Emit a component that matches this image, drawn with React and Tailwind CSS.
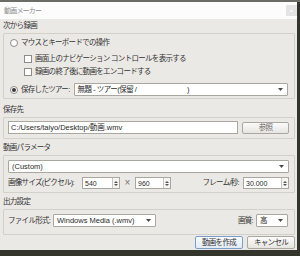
import React from "react";

const JP = { fontFamily: "'Liberation Sans','Noto Sans CJK JP',sans-serif" };

function Radio({ checked }) {
  return (
    <span className="w-[8px] h-[8px] rounded-full border border-[#8e8c87] bg-white flex items-center justify-center shrink-0">
      {checked && <span className="w-[4px] h-[4px] rounded-full bg-[#3a3a3a]" />}
    </span>
  );
}

function Check() {
  return <span className="w-[8px] h-[8px] border border-[#8e8c87] bg-white shrink-0" />;
}

function Arrow() {
  return (
    <svg width="5" height="3" viewBox="0 0 5 3" className="shrink-0">
      <path d="M0 0 L5 0 L2.5 3 Z" fill="#4a4a4a" />
    </svg>
  );
}

function Select({ className, children }) {
  return (
    <div className={"h-[13px] border border-[#aaa7a1] bg-white rounded-[1px] flex items-center justify-between pl-[3px] pr-[4px] " + className}>
      <span className="text-[7.5px] leading-none text-[#2a2a2a] whitespace-nowrap">{children}</span>
      <Arrow />
    </div>
  );
}

function Spin({ className, children }) {
  return (
    <div className={"h-[12px] border border-[#aaa7a1] bg-white flex items-stretch " + className}>
      <span className="flex-1 flex items-center pl-[2px] text-[7px] leading-none text-[#2a2a2a]">{children}</span>
      <span className="w-[7px] border-l border-[#c9c6c0] flex flex-col items-center justify-center gap-[1px] bg-[#f6f5f3]">
        <svg width="4" height="2" viewBox="0 0 4 2"><path d="M0 2 L4 2 L2 0 Z" fill="#555" /></svg>
        <svg width="4" height="2" viewBox="0 0 4 2"><path d="M0 0 L4 0 L2 2 Z" fill="#555" /></svg>
      </span>
    </div>
  );
}

function Jp({ children, className = "" }) {
  return <span className={"text-[7.5px] tracking-[-0.7px] leading-none text-[#333] whitespace-nowrap " + className}>{children}</span>;
}

function Group({ className, children }) {
  return <div className={"border border-[#d3d0ca] rounded-[1px] " + className}>{children}</div>;
}

export default function App() {
  return (
    <div className="w-[300px] h-[256px] bg-[#33352d] overflow-hidden" style={JP}>
      <div className="h-[2px] bg-[#6b6c66]" />
      <div className="w-[297px] flex flex-col">
        {/* title bar */}
        <div className="h-[17px] bg-[#fcfcfc] flex items-center justify-between pl-[4px] pr-[0px]">
          <span className="text-[7px] tracking-[-0.8px] text-[#8d8d8d] leading-none">動画メーカー</span>
          <span className="w-[11px] h-[11px] bg-[#e4e4e4] flex items-center justify-center">
            <span className="w-[3px] h-[2px] bg-[#f4f4f4]" />
          </span>
        </div>
        {/* body */}
        <div className="h-[231px] bg-[#ebe9e5] flex flex-col pl-[3px] pr-[2px]">
          <div className="h-[14px] flex items-center"><Jp>次から録画</Jp></div>
          <Group className="h-[66px] pt-[2px] pr-[6px]">
            <div className="h-[14px] flex items-center pl-[6px] gap-[3px]">
              <Radio /><Jp>マウスとキーボードでの操作</Jp>
            </div>
            <div className="h-[13px] mt-[2px] flex items-center pl-[20px] gap-[3px]">
              <Check /><Jp>画面上のナビゲーション コントロールを表示する</Jp>
            </div>
            <div className="h-[13px] flex items-center pl-[20px] gap-[3px]">
              <Check /><Jp>録画の終了後に動画をエンコードする</Jp>
            </div>
            <div className="h-[13px] mt-[5px] flex items-center pl-[6px]">
              <Radio checked /><Jp className="ml-[3px]">保存したツアー:</Jp>
              <Select className="ml-[4px] flex-1"><span className="tracking-[-0.5px]">無題 - ツアー(保留 / 　　　　　　　)</span></Select>
            </div>
          </Group>
          <div className="h-[18px] pt-[4px] flex items-center"><Jp>保存先</Jp></div>
          <Group className="h-[22px] pt-[3px] pl-[4px] pr-[5px] flex items-start">
            <div className="h-[13px] w-[230px] border border-[#aaa7a1] bg-white flex items-center pl-[2px]">
              <span className="text-[7.5px] leading-none text-[#2a2a2a] whitespace-nowrap">C:/Users/taiyo/Desktop/動画.wmv</span>
            </div>
            <div className="ml-[4px] mt-[1px] h-[12px] flex-1 border border-[#aba8a2] rounded-[2px] bg-gradient-to-b from-[#fbfbfa] to-[#e7e5e1] flex items-center justify-center">
              <Jp className="text-[#666]">参照</Jp>
            </div>
          </Group>
          <div className="h-[16px] pt-[2px] flex items-center"><Jp>動画パラメータ</Jp></div>
          <Group className="h-[38px] pt-[4px] pl-[4px] pr-[5px]">
            <Select>(Custom)</Select>
            <div className="h-[12px] mt-[4px] flex items-center">
              <Jp className="w-[74px]">画像サイズ(ピクセル):</Jp>
              <Spin className="w-[38px]">540</Spin>
              <span className="w-[15px] text-center text-[10px] leading-none text-[#777]">×</span>
              <Spin className="w-[36px]">960</Spin>
              <span className="flex-1" />
              <Jp className="mr-[4px]">フレーム/秒:</Jp>
              <Spin className="w-[46px]">30.000</Spin>
            </div>
          </Group>
          <div className="h-[16px] pt-[2px] flex items-center"><Jp>出力設定</Jp></div>
          <Group className="h-[26px] pt-[4px] pl-[4px] pr-[6px] flex items-start">
            <div className="h-[13px] flex items-center w-[45px]"><Jp>ファイル形式:</Jp></div>
            <Select className="w-[103px]">Windows Media (.wmv)</Select>
            <span className="flex-1" />
            <div className="h-[13px] flex items-center mr-[3px]"><Jp>画質:</Jp></div>
            <Select className="w-[32px]">高</Select>
          </Group>
          <div className="h-[13px] mt-[1px] flex justify-end gap-[4px] pr-[0px]">
            <div className="w-[48px] h-[13px] border border-[#7d9dc9] rounded-[2px] bg-gradient-to-b from-[#f7fafd] to-[#e3ebf4] flex items-center justify-center">
              <Jp>動画を作成</Jp>
            </div>
            <div className="w-[48px] h-[13px] border border-[#aba8a2] rounded-[2px] bg-gradient-to-b from-[#fbfbfa] to-[#e7e5e1] flex items-center justify-center">
              <Jp>キャンセル</Jp>
            </div>
          </div>
        </div>
      </div>
    </div>
  );
}
